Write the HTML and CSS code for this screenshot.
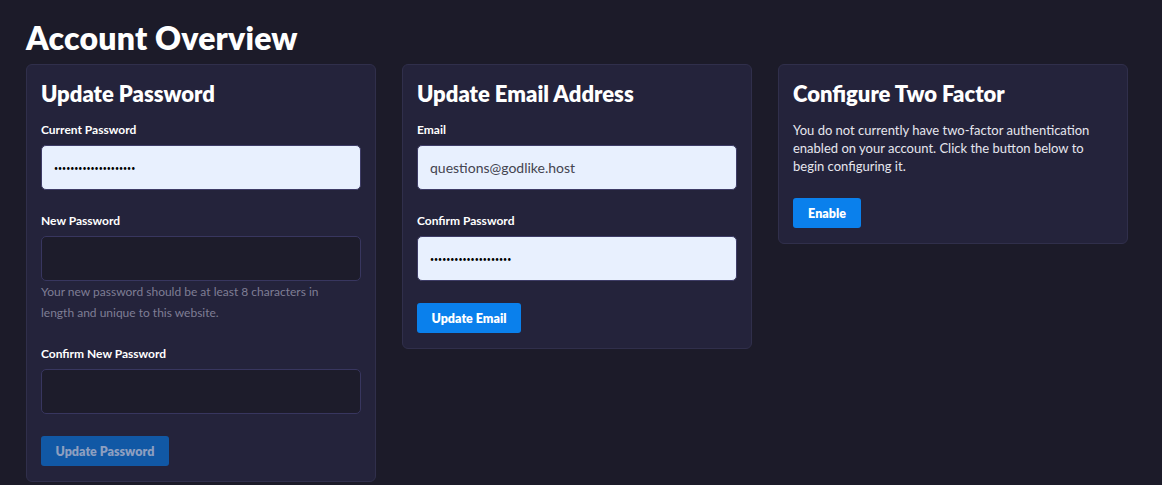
FILE: index.html
```html
<!DOCTYPE html>
<html lang="en">
<head>
<meta charset="utf-8">
<title>Account Overview</title>
<link rel="stylesheet" href="styles.css">
</head>
<body>
<main class="page">
  <h1 class="page-title">Account Overview</h1>
  <div class="grid">
    <section class="card">
      <h2 class="card-title">Update Password</h2>
      <div class="field">
        <label class="label">Current Password</label>
        <input class="input input-filled" type="password" value="abcdefghijklmnopqrst">
      </div>
      <div class="field field-help">
        <label class="label">New Password</label>
        <input class="input" type="password">
        <p class="help">Your new password should be at least 8 characters in length and unique to this website.</p>
      </div>
      <div class="field">
        <label class="label">Confirm New Password</label>
        <input class="input" type="password">
      </div>
      <button class="btn btn-disabled" type="button">Update Password</button>
    </section>

    <section class="card">
      <h2 class="card-title">Update Email Address</h2>
      <div class="field">
        <label class="label">Email</label>
        <input class="input input-filled" type="text" value="questions@godlike.host">
      </div>
      <div class="field">
        <label class="label">Confirm Password</label>
        <input class="input input-filled" type="password" value="abcdefghijklmnopqrst">
      </div>
      <button class="btn" type="button">Update Email</button>
    </section>

    <section class="card">
      <h2 class="card-title">Configure Two Factor</h2>
      <p class="text">You do not currently have two-factor authentication enabled on your account. Click the button below to begin configuring it.</p>
      <button class="btn btn-enable" type="button">Enable</button>
    </section>
  </div>
</main>
</body>
</html>
```

FILE: styles.css
```css
* {
  box-sizing: border-box;
}

html, body {
  margin: 0;
  background: #1c1b29;
}

body {
  font-family: "Lato", "Liberation Sans", sans-serif;
  color: #ffffff;
}

.page {
  padding: 18px 26px 0 26px;
}

.page-title {
  margin: 0 0 7px 0;
  font-size: 32px;
  line-height: 39px;
  font-weight: 800;
  letter-spacing: 0.2px;
}

.grid {
  display: grid;
  grid-template-columns: repeat(3, 350px);
  column-gap: 26px;
  align-items: start;
}

.card {
  background: #24233b;
  border: 1px solid #302f4b;
  border-radius: 6px;
  padding: 14px 14px 15px 14px;
}

.card-title {
  margin: 0 0 12px 0;
  font-size: 22px;
  line-height: 30px;
  font-weight: 800;
}

.field {
  margin-bottom: 22px;
}

.field-help {
  margin-bottom: 22px;
}

.label {
  display: block;
  font-size: 12px;
  line-height: 17px;
  font-weight: 700;
  margin-bottom: 7px;
}

.input {
  display: block;
  width: 100%;
  height: 45px;
  padding: 0 12px;
  border: 1px solid #38365f;
  border-radius: 5px;
  background: #1d1c2b;
  color: #ffffff;
  font-family: inherit;
  font-size: 14px;
  outline: none;
}

.input-filled {
  background: #e8f0fe;
  color: #444450;
  border-color: #3e3c66;
}

.input[type="password"].input-filled {
  color: #000000;
  font-size: 7px;
  letter-spacing: 0;
}

.help {
  margin: 0;
  font-size: 12px;
  line-height: 21px;
  color: #7f7e95;
  padding-right: 20px;
}

.text {
  margin: 0 0 23px 0;
  font-size: 13px;
  line-height: 18px;
  color: #e6e6ee;
}

.btn {
  display: block;
  height: 30px;
  padding: 0 14.5px;
  border: none;
  border-radius: 3px;
  background: #0a80ec;
  color: #ffffff;
  font-family: inherit;
  font-size: 12.5px;
  font-weight: 800;
  cursor: pointer;
}

.btn-disabled {
  background: #1158a5;
  color: #8d9fc0;
}

.btn-enable {
  padding: 0;
  width: 68px;
}
```
